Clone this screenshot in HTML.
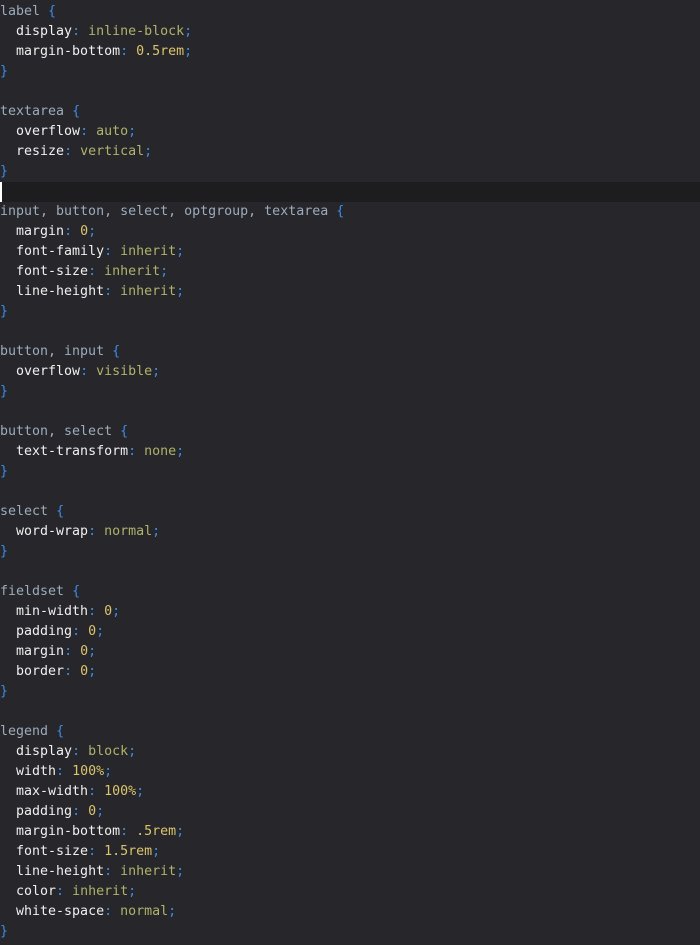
<!DOCTYPE html>
<html><head><meta charset="utf-8"><style>
html,body{margin:0;padding:0;background:#26262b;width:700px;height:945px;overflow:hidden}
pre{margin:0;padding-top:2px;font-family:"DejaVu Sans Mono","Liberation Mono",monospace;font-size:13.3px;line-height:20px;color:#e6e6e6;white-space:pre}
.l{display:block;height:20px}
.cur{background:#1d1d20;position:relative}
.cur:before{content:"";position:absolute;left:0;top:0;width:2px;height:20px;background:#fff}
.s{color:#9cacbc}.b{color:#3b8de6}.v{color:#b0b36a}.n{color:#dcc46c}.p{color:#f0f0f0}
</style></head><body><pre><span class="l"><span class="s">label</span> <span class="b">{</span></span><span class="l">  <span class="p">display</span><span class="b">:</span> <span class="v">inline-block</span><span class="b">;</span></span><span class="l">  <span class="p">margin-bottom</span><span class="b">:</span> <span class="n">0.5rem</span><span class="b">;</span></span><span class="l"><span class="b">}</span></span><span class="l"></span><span class="l"><span class="s">textarea</span> <span class="b">{</span></span><span class="l">  <span class="p">overflow</span><span class="b">:</span> <span class="v">auto</span><span class="b">;</span></span><span class="l">  <span class="p">resize</span><span class="b">:</span> <span class="v">vertical</span><span class="b">;</span></span><span class="l"><span class="b">}</span></span><span class="l cur"></span><span class="l"><span class="s">input, button, select, optgroup, textarea</span> <span class="b">{</span></span><span class="l">  <span class="p">margin</span><span class="b">:</span> <span class="n">0</span><span class="b">;</span></span><span class="l">  <span class="p">font-family</span><span class="b">:</span> <span class="v">inherit</span><span class="b">;</span></span><span class="l">  <span class="p">font-size</span><span class="b">:</span> <span class="v">inherit</span><span class="b">;</span></span><span class="l">  <span class="p">line-height</span><span class="b">:</span> <span class="v">inherit</span><span class="b">;</span></span><span class="l"><span class="b">}</span></span><span class="l"></span><span class="l"><span class="s">button, input</span> <span class="b">{</span></span><span class="l">  <span class="p">overflow</span><span class="b">:</span> <span class="v">visible</span><span class="b">;</span></span><span class="l"><span class="b">}</span></span><span class="l"></span><span class="l"><span class="s">button, select</span> <span class="b">{</span></span><span class="l">  <span class="p">text-transform</span><span class="b">:</span> <span class="v">none</span><span class="b">;</span></span><span class="l"><span class="b">}</span></span><span class="l"></span><span class="l"><span class="s">select</span> <span class="b">{</span></span><span class="l">  <span class="p">word-wrap</span><span class="b">:</span> <span class="v">normal</span><span class="b">;</span></span><span class="l"><span class="b">}</span></span><span class="l"></span><span class="l"><span class="s">fieldset</span> <span class="b">{</span></span><span class="l">  <span class="p">min-width</span><span class="b">:</span> <span class="n">0</span><span class="b">;</span></span><span class="l">  <span class="p">padding</span><span class="b">:</span> <span class="n">0</span><span class="b">;</span></span><span class="l">  <span class="p">margin</span><span class="b">:</span> <span class="n">0</span><span class="b">;</span></span><span class="l">  <span class="p">border</span><span class="b">:</span> <span class="n">0</span><span class="b">;</span></span><span class="l"><span class="b">}</span></span><span class="l"></span><span class="l"><span class="s">legend</span> <span class="b">{</span></span><span class="l">  <span class="p">display</span><span class="b">:</span> <span class="v">block</span><span class="b">;</span></span><span class="l">  <span class="p">width</span><span class="b">:</span> <span class="n">100%</span><span class="b">;</span></span><span class="l">  <span class="p">max-width</span><span class="b">:</span> <span class="n">100%</span><span class="b">;</span></span><span class="l">  <span class="p">padding</span><span class="b">:</span> <span class="n">0</span><span class="b">;</span></span><span class="l">  <span class="p">margin-bottom</span><span class="b">:</span> <span class="n">.5rem</span><span class="b">;</span></span><span class="l">  <span class="p">font-size</span><span class="b">:</span> <span class="n">1.5rem</span><span class="b">;</span></span><span class="l">  <span class="p">line-height</span><span class="b">:</span> <span class="v">inherit</span><span class="b">;</span></span><span class="l">  <span class="p">color</span><span class="b">:</span> <span class="v">inherit</span><span class="b">;</span></span><span class="l">  <span class="p">white-space</span><span class="b">:</span> <span class="v">normal</span><span class="b">;</span></span><span class="l"><span class="b">}</span></span></pre></body></html>
